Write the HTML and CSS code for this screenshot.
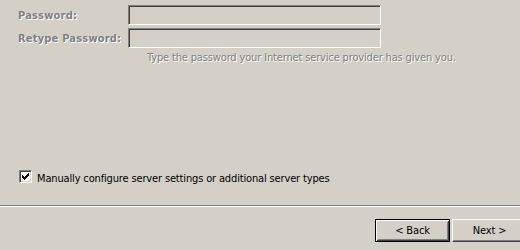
FILE: index.html
```html
<!DOCTYPE html>
<html>
<head>
<meta charset="utf-8">
<link rel="stylesheet" href="styles.css">
</head>
<body>
<div class="page">
  <div class="form">
    <div class="row">
      <span class="label">Password:</span>
      <span class="field"></span>
    </div>
    <div class="row">
      <span class="label">Retype Password:</span>
      <span class="field"></span>
    </div>
    <div class="help">Type the password your Internet service provider has given you.</div>
  </div>
  <div class="check-row">
    <span class="checkbox">
      <svg width="7" height="7" viewBox="0 0 7 7"><path d="M0 2h1v1h1v1h1v-1h1v-1h1v-1h1v-1h1v3h-1v1h-1v1h-1v1h-1v1h-1v-1h-1v-1h-1z" fill="#000"/></svg>
    </span>
    <span class="check-label">Manually configure server settings or additional server types</span>
  </div>
  <div class="sep"></div>
  <div class="buttons">
    <span class="btn default">&lt; Back</span>
    <span class="btn next">Next &gt;</span>
  </div>
</div>
</body>
</html>
```
FILE: styles.css
```css
html, body {
  margin: 0;
  padding: 0;
  background: #d4d0c8;
}
.page {
  width: 520px;
  height: 250px;
  overflow: hidden;
  display: flex;
  flex-direction: column;
  font-family: "DejaVu Sans Condensed", "DejaVu Sans", sans-serif;
  font-size: 11px;
  letter-spacing: -0.15px;
  color: #000;
}
.form {
  padding-top: 5px;
}
.row {
  display: flex;
  align-items: center;
  height: 20px;
  margin-bottom: 3px;
}
.label {
  width: 110px;
  padding-left: 18px;
  font-weight: bold;
  letter-spacing: 0.2px;
  color: #808080;
  text-shadow: 1px 1px 0 #fff;
}
.field {
  width: 253px;
  height: 20px;
  box-sizing: border-box;
  border: 1px solid;
  border-color: #808080 #fff #fff #808080;
  box-shadow: inset 1px 1px 0 #404040, inset -1px -1px 0 #d4d0c8;
}
.help {
  padding-left: 147px;
  margin-top: 1px;
  color: #808080;
  text-shadow: 1px 1px 0 #fff;
}
.check-row {
  margin-top: 106px;
  display: flex;
  align-items: center;
  padding-left: 19px;
  height: 13px;
}
.checkbox {
  width: 13px;
  height: 13px;
  box-sizing: border-box;
  background: #fff;
  border: 1px solid;
  border-color: #808080 #fff #fff #808080;
  box-shadow: inset 1px 1px 0 #404040, inset -1px -1px 0 #d4d0c8;
  display: flex;
  align-items: center;
  justify-content: center;
}
.check-label {
  margin-left: 5px;
  position: relative;
  top: 2px;
}
.sep {
  margin-top: 22px;
  height: 1px;
  background: #808080;
  border-bottom: 1px solid #fff;
}
.buttons {
  display: flex;
  padding-left: 375px;
  margin-top: 12px;
  gap: 2px;
}
.btn {
  width: 75px;
  height: 23px;
  box-sizing: border-box;
  display: flex;
  align-items: center;
  justify-content: center;
  flex-shrink: 0;
}
.default {
  border: 1px solid #000;
  box-shadow: inset 1px 1px 0 #fff, inset -1px -1px 0 #404040, inset 2px 2px 0 #d4d0c8, inset -2px -2px 0 #808080;
}
.next {
  border: 1px solid;
  border-color: #fff #404040 #404040 #fff;
  box-shadow: inset -1px -1px 0 #808080;
}
```
